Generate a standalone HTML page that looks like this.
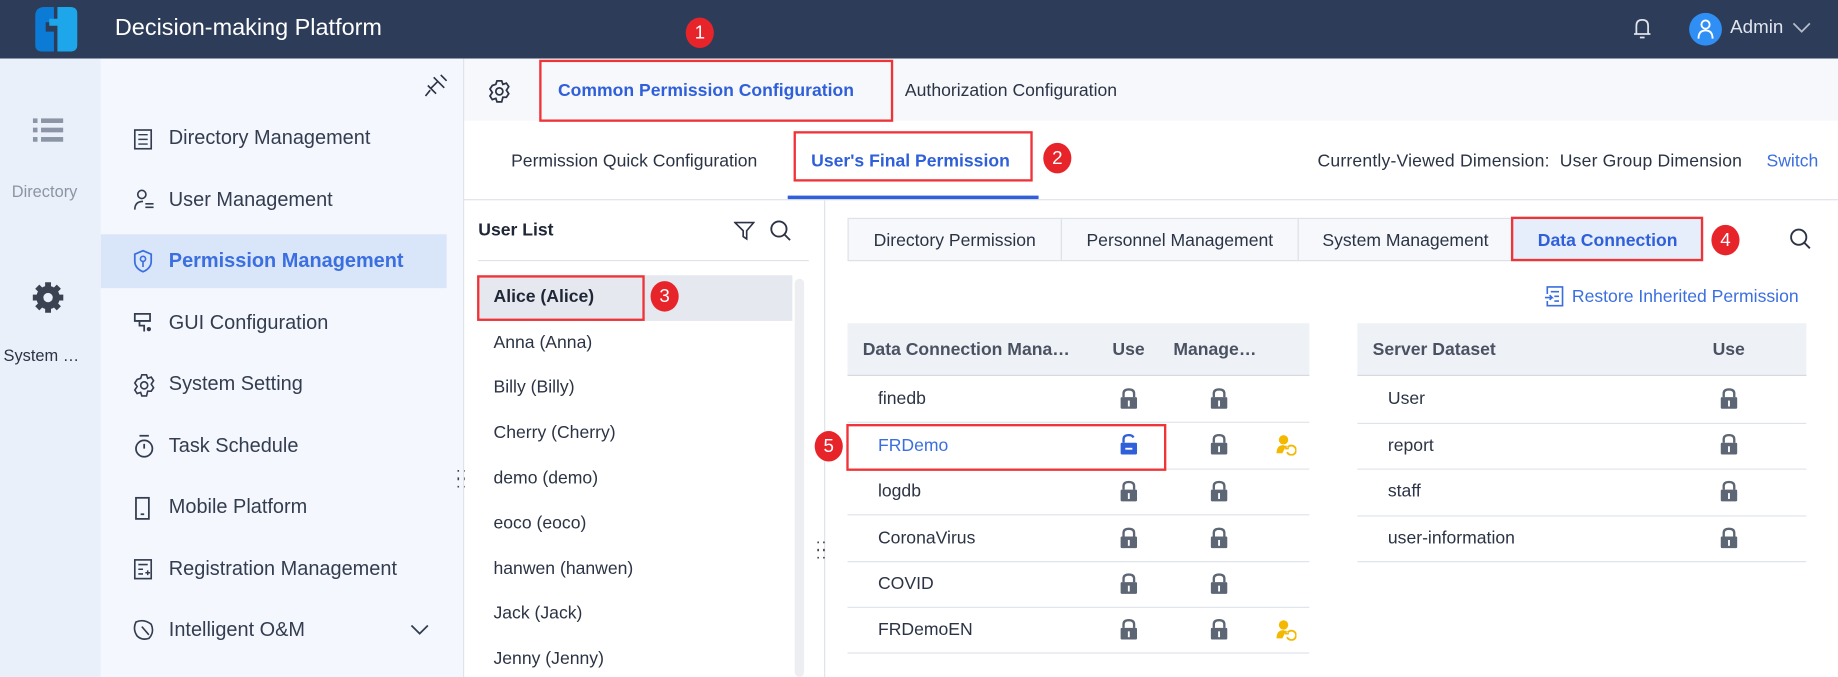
<!DOCTYPE html>
<html><head><meta charset="utf-8"><style>
*{margin:0;padding:0;box-sizing:border-box}
html,body{width:1838px;height:677px;overflow:hidden;background:#fff}
#w{position:absolute;left:0;top:0;width:1568px;height:578px;transform:scale(1.17219,1.1713);transform-origin:0 0;font-family:"Liberation Sans",sans-serif;color:#2b3344}
.a{position:absolute;white-space:nowrap}
.box{position:absolute;border:2.5px solid #ef3438}
.bd{position:absolute;width:24px;height:26px;border-radius:50%;background:#e8242b;color:#fff;font-size:16px;text-align:center;line-height:28px}
.mi{position:absolute;left:144px;font-size:17px;color:#333d4f}
.ic{position:absolute;left:113px}
.ul{position:absolute;left:421px;font-size:15px;color:#2b3344}
.row{position:absolute;height:1px;background:#dfe3ea}
.lk{position:absolute}
.tc{position:absolute;top:186px;height:37px;border:1px solid #dde1e8;background:#f6f8fb;font-size:15px;line-height:37px;text-align:center}
</style></head><body><div id="w">
<div class="a" style="left:0;top:0;width:1568px;height:50px;background:#2d3c58"></div>
<svg class="a" style="left:30px;top:6px" width="36" height="38" viewBox="0 0 36 38"><path d="M0 8 Q0 0 8 0 H16 V13 H9 V21 H16 V38 H6 Q0 38 0 32Z" fill="#0b7bd6"/><path d="M19 0 H30 Q36 0 36 6 V32 Q36 38 30 38 H19 V16 H12 V10 H19Z" fill="#1da6ea"/></svg>
<div class="a" style="left:98px;top:13px;font-size:20px;color:#fff">Decision-making Platform</div>
<svg class="a" style="left:1392px;top:14px" width="18" height="20" viewBox="0 0 18 20"><path d="M4 15 V8 Q4 3 9 3 Q14 3 14 8 V15 Z M2 15 H16 M7 18 H11" fill="none" stroke="#dfe3ea" stroke-width="1.5"/></svg>
<div class="a" style="left:1441px;top:11px;width:28px;height:28px;border-radius:50%;background:#2f8ff5"></div>
<svg class="a" style="left:1445px;top:15px" width="20" height="20"><circle cx="10" cy="6" r="3.5" fill="none" stroke="#fff" stroke-width="1.6"/><path d="M4 18 Q4 11 10 11 Q16 11 16 18" fill="none" stroke="#fff" stroke-width="1.6"/></svg>
<div class="a" style="left:1476px;top:15px;font-size:16px;color:#dfe4ee">Admin</div>
<svg class="a" style="left:1529px;top:19px" width="16" height="10"><path d="M1 1 L8 8 L15 1" fill="none" stroke="#b5bdcc" stroke-width="1.5"/></svg>
<div class="a" style="left:0;top:50px;width:86px;height:528px;background:#eaf0fa"></div>
<svg class="a" style="left:28px;top:101px" width="26" height="22"><g fill="#8b95a6"><rect x="0" y="0" width="4" height="4"/><rect x="7" y="0" width="19" height="4"/><rect x="0" y="8" width="4" height="4"/><rect x="7" y="8" width="19" height="4"/><rect x="0" y="16" width="4" height="4"/><rect x="7" y="16" width="19" height="4"/></g></svg>
<div class="a" style="left:10px;top:155px;font-size:14px;color:#8c95a5">Directory</div>
<svg class="a" style="left:27px;top:240px" width="28" height="28" viewBox="0 0 28 28"><g fill="#3b4252"><circle cx="14" cy="14" r="10"/><g stroke="#3b4252" stroke-width="5"><path d="M14 1V27M1 14H27M4.8 4.8L23.2 23.2M23.2 4.8L4.8 23.2"/></g></g><circle cx="14" cy="14" r="4" fill="#eaf0fa"/></svg>
<div class="a" style="left:3px;top:295px;font-size:14px;color:#2b3344">System …</div>
<div class="a" style="left:86px;top:50px;width:309px;height:528px;background:#f4f7fd"></div>
<svg class="a" style="left:362px;top:63px" width="20" height="20"><path d="M5 14 L1 19 M3 10 L10 17 M8 3 L17 12 M6 12 L12 6 M14 1 L19 6" fill="none" stroke="#2b3344" stroke-width="1.4"/></svg>
<div class="a" style="left:86px;top:200px;width:295px;height:46px;background:#d9e6fa"></div>
<svg class="ic" style="top:110px" width="18" height="18"><rect x="2" y="1" width="14" height="16" fill="none" stroke="#333d4f" stroke-width="1.4"/><path d="M5 5H13M5 9H13M5 13H13" stroke="#333d4f" stroke-width="1.2"/></svg>
<div class="mi" style="top:108px">Directory Management</div>
<svg class="ic" style="top:161px" width="20" height="20"><circle cx="8" cy="5" r="3.5" fill="none" stroke="#333d4f" stroke-width="1.4"/><path d="M2 18 Q2 11 9 11 M11 13H18M11 16H18" fill="none" stroke="#333d4f" stroke-width="1.4"/></svg>
<div class="mi" style="top:161px">User Management</div>
<svg class="ic" style="top:213px" width="18" height="20"><path d="M9 1 L16 4 V10 Q16 16 9 19 Q2 16 2 10 V4Z" fill="none" stroke="#3b6fe0" stroke-width="1.5"/><circle cx="9" cy="8" r="2.2" fill="none" stroke="#3b6fe0" stroke-width="1.4"/><path d="M9 10V15" stroke="#3b6fe0" stroke-width="1.4"/></svg>
<div class="mi" style="top:213px;color:#3b6fe0;font-weight:bold">Permission Management</div>
<svg class="ic" style="top:266px" width="18" height="20"><path d="M2 2H15V8H2Z M6 8V12H10V17" fill="none" stroke="#333d4f" stroke-width="1.5"/><circle cx="14" cy="15" r="1.8" fill="#333d4f"/></svg>
<div class="mi" style="top:266px">GUI Configuration</div>
<svg class="ic" style="top:319px" width="20" height="20" viewBox="0 0 20 20"><path d="M8 1H12L13 4 16 3 18 6 16 9 18 12 16 15 13 15 12 19H8L7 16 4 17 2 14 4 11 2 8 4 5 7 4Z" fill="none" stroke="#333d4f" stroke-width="1.4"/><circle cx="10" cy="10" r="3" fill="none" stroke="#333d4f" stroke-width="1.4"/></svg>
<div class="mi" style="top:318px">System Setting</div>
<svg class="ic" style="top:370px" width="20" height="22"><path d="M6 2H14" stroke="#333d4f" stroke-width="1.5"/><circle cx="10" cy="13" r="7" fill="none" stroke="#333d4f" stroke-width="1.5"/><path d="M10 9V13" stroke="#333d4f" stroke-width="1.5"/></svg>
<div class="mi" style="top:371px">Task Schedule</div>
<svg class="ic" style="top:424px" width="18" height="20"><rect x="3" y="1" width="11" height="18" fill="none" stroke="#333d4f" stroke-width="1.5"/><path d="M7 15H10" stroke="#333d4f" stroke-width="1.5"/></svg>
<div class="mi" style="top:423px">Mobile Platform</div>
<svg class="ic" style="top:476px" width="18" height="20"><rect x="2" y="2" width="14" height="16" fill="none" stroke="#333d4f" stroke-width="1.4"/><path d="M5 6H13M5 10H9M5 14H9M11 13H15M13 11V15" stroke="#333d4f" stroke-width="1.3"/></svg>
<div class="mi" style="top:476px">Registration Management</div>
<svg class="ic" style="top:528px" width="20" height="20"><path d="M3 3 Q10 0 16 5 Q19 12 14 17 Q8 19 4 15 Q0 9 3 3Z M8 7 L14 14" fill="none" stroke="#333d4f" stroke-width="1.4"/></svg>
<div class="mi" style="top:528px">Intelligent O&amp;M</div>
<svg class="a" style="left:350px;top:533px" width="16" height="10"><path d="M1 1 L8 8 L15 1" fill="none" stroke="#333d4f" stroke-width="1.5"/></svg>
<div class="a" style="left:389px;top:401px;font-size:14px;line-height:7px;color:#444;letter-spacing:1px">::<br>::</div>
<div class="a" style="left:395px;top:50px;width:1173px;height:53px;background:#f6f8fc;border-left:1px solid #dfe3ea"></div>
<svg class="a" style="left:416px;top:68px" width="20" height="20" viewBox="0 0 20 20"><path d="M8 1H12L13 4 16 3 18 6 16 9 18 12 16 15 13 15 12 19H8L7 16 4 17 2 14 4 11 2 8 4 5 7 4Z" fill="none" stroke="#2b3344" stroke-width="1.5"/><circle cx="10" cy="10" r="3" fill="none" stroke="#2b3344" stroke-width="1.5"/></svg>
<div class="box" style="left:460px;top:51px;width:302px;height:53px"></div>
<div class="a" style="left:476px;top:69px;font-size:15px;font-weight:bold;color:#2f5fd9">Common Permission Configuration</div>
<div class="a" style="left:772px;top:69px;font-size:15px;color:#2b3344">Authorization Configuration</div>
<div class="bd" style="left:585px;top:15px">1</div>
<div class="a" style="left:395px;top:103px;width:1173px;height:68px;border-left:1px solid #dfe3ea;border-bottom:1px solid #dfe3ea"></div>
<div class="a" style="left:436px;top:129px;font-size:15px">Permission Quick Configuration</div>
<div class="box" style="left:677px;top:112px;width:204px;height:43px"></div>
<div class="a" style="left:692px;top:129px;font-size:15px;font-weight:bold;color:#2f5fd9">User's Final Permission</div>
<div class="a" style="left:672px;top:167px;width:214px;height:3px;background:#2f5fd9"></div>
<div class="bd" style="left:890px;top:122px">2</div>
<div class="a" style="left:1124px;top:129px;font-size:15px;letter-spacing:0.15px">Currently-Viewed Dimension:&nbsp; User Group Dimension</div>
<div class="a" style="left:1507px;top:129px;font-size:15px;color:#3b6fe0">Switch</div>
<div class="a" style="left:395px;top:171px;width:1px;height:407px;background:#dfe3ea"></div>
<div class="a" style="left:408px;top:188px;font-size:15px;font-weight:bold;color:#1f2636">User List</div>
<svg class="a" style="left:626px;top:188px" width="18" height="18"><path d="M1 2H17L11 9V16L8 14V9Z" fill="none" stroke="#2b3344" stroke-width="1.4"/></svg>
<svg class="a" style="left:656px;top:187px" width="20" height="20"><circle cx="8.5" cy="8.5" r="6.5" fill="none" stroke="#2b3344" stroke-width="1.6"/><path d="M13 13L18 18" stroke="#2b3344" stroke-width="1.6"/></svg>
<div class="a" style="left:408px;top:222px;width:282px;height:1px;background:#dfe3ea"></div>
<div class="a" style="left:408px;top:235px;width:268px;height:39px;background:#e5e8ef"></div>
<div class="box" style="left:407px;top:235px;width:143px;height:39px"></div>
<div class="a" style="left:678px;top:238px;width:8px;height:340px;border-radius:4px;background:#eceef2"></div>
<div class="ul" style="top:245px;font-weight:bold;color:#1f2636">Alice (Alice)</div>
<div class="bd" style="left:555px;top:240px">3</div>
<div class="ul" style="top:284px">Anna (Anna)</div>
<div class="ul" style="top:322px">Billy (Billy)</div>
<div class="ul" style="top:361px">Cherry (Cherry)</div>
<div class="ul" style="top:400px">demo (demo)</div>
<div class="ul" style="top:438px">eoco (eoco)</div>
<div class="ul" style="top:477px">hanwen (hanwen)</div>
<div class="ul" style="top:515px">Jack (Jack)</div>
<div class="ul" style="top:554px">Jenny (Jenny)</div>
<div class="a" style="left:703px;top:171px;width:1px;height:407px;background:#dfe3ea"></div>
<div class="a" style="left:696px;top:462px;font-size:14px;line-height:7px;color:#444;letter-spacing:1px">::<br>::</div>
<div class="tc" style="left:723px;width:183px">Directory Permission</div>
<div class="tc" style="left:905px;width:203px">Personnel Management</div>
<div class="tc" style="left:1107px;width:184px">System Management</div>
<div class="tc" style="left:1290px;width:163px;background:#e6eefc;font-weight:bold;color:#2f5fd9">Data Connection</div>
<div class="box" style="left:1289px;top:185px;width:164px;height:38px"></div>
<div class="bd" style="left:1460px;top:192px">4</div>
<svg class="a" style="left:1526px;top:194px" width="20" height="20"><circle cx="8.5" cy="8.5" r="6.5" fill="none" stroke="#2b3344" stroke-width="1.6"/><path d="M13 13L18 18" stroke="#2b3344" stroke-width="1.6"/></svg>
<svg class="a" style="left:1317px;top:243px" width="18" height="20"><path d="M3 8V2H16V18H3V14 M6 6H13M9 10H13M9 14H13 M1 11H7L5 9M7 11L5 13" fill="none" stroke="#3b6fe0" stroke-width="1.4"/></svg>
<div class="a" style="left:1341px;top:245px;font-size:15px;color:#3b6fe0">Restore Inherited Permission</div>
<div class="a" style="left:723px;top:276px;width:394px;height:45px;background:#eef1f6;border-bottom:1px solid #d5d9e0"></div>
<div class="a" style="left:736px;top:290px;font-size:15px;font-weight:bold;color:#4a5262">Data Connection Mana…</div>
<div class="a" style="left:949px;top:290px;font-size:15px;font-weight:bold;color:#4a5262">Use</div>
<div class="a" style="left:1001px;top:290px;font-size:15px;font-weight:bold;color:#4a5262">Manage…</div>
<div class="row" style="left:723px;top:360px;width:394px"></div>
<div class="row" style="left:723px;top:400px;width:394px"></div>
<div class="row" style="left:723px;top:439px;width:394px"></div>
<div class="row" style="left:723px;top:479px;width:394px"></div>
<div class="row" style="left:723px;top:518px;width:394px"></div>
<div class="row" style="left:723px;top:557px;width:394px"></div>
<div class="a" style="left:749px;top:332px;font-size:15px">finedb</div>
<div class="a" style="left:749px;top:372px;font-size:15px;color:#3b6fe0">FRDemo</div>
<div class="a" style="left:749px;top:411px;font-size:15px">logdb</div>
<div class="a" style="left:749px;top:451px;font-size:15px">CoronaVirus</div>
<div class="a" style="left:749px;top:490px;font-size:15px">COVID</div>
<div class="a" style="left:749px;top:529px;font-size:15px">FRDemoEN</div>
<div class="box" style="left:722px;top:362px;width:273px;height:40px"></div>
<div class="bd" style="left:695px;top:368px">5</div>
<div class="a" style="left:1158px;top:276px;width:383px;height:45px;background:#eef1f6;border-bottom:1px solid #d5d9e0"></div>
<div class="a" style="left:1171px;top:290px;font-size:15px;font-weight:bold;color:#4a5262">Server Dataset</div>
<div class="a" style="left:1461px;top:290px;font-size:15px;font-weight:bold;color:#4a5262">Use</div>
<div class="row" style="left:1158px;top:361px;width:383px"></div>
<div class="row" style="left:1158px;top:400px;width:383px"></div>
<div class="row" style="left:1158px;top:440px;width:383px"></div>
<div class="row" style="left:1158px;top:479px;width:383px"></div>
<div class="a" style="left:1184px;top:332px;font-size:15px">User</div>
<div class="a" style="left:1184px;top:372px;font-size:15px">report</div>
<div class="a" style="left:1184px;top:411px;font-size:15px">staff</div>
<div class="a" style="left:1184px;top:451px;font-size:15px">user-information</div>
<svg width="0" height="0" style="position:absolute"><defs><g id="L"><path d="M3.5 8V5 Q3.5 1.5 8 1.5 Q12.5 1.5 12.5 5V8" fill="none" stroke="#5d6675" stroke-width="2"/><rect x="1" y="8" width="14" height="10" rx="1" fill="#5d6675"/><rect x="7.2" y="11" width="1.6" height="5" fill="#fff"/></g><g id="U"><path d="M3.5 8V5 Q3.5 1.5 8 1.5 Q11 1.5 12 3.5" fill="none" stroke="#2f5fd9" stroke-width="2"/><rect x="1" y="8" width="14" height="10" rx="1" fill="#2f5fd9"/><rect x="5" y="12.3" width="6" height="1.6" fill="#fff"/></g><g id="P"><circle cx="7" cy="4.5" r="4" fill="#f5b800"/><path d="M1 16 Q1 9 7 9 L9 10 L6 16Z" fill="#f5b800"/><path d="M10.5 11 A4 4 0 1 1 10 15" fill="none" stroke="#f5b800" stroke-width="1.6"/><path d="M9 9.5V12H11.5" fill="none" stroke="#f5b800" stroke-width="1.4"/></g></defs></svg>
<svg class="lk" style="left:955px;top:331px" width="16" height="19"><use href="#L"/></svg>
<svg class="lk" style="left:1032px;top:331px" width="16" height="19"><use href="#L"/></svg>
<svg class="lk" style="left:955px;top:370px" width="16" height="19"><use href="#U"/></svg>
<svg class="lk" style="left:1032px;top:370px" width="16" height="19"><use href="#L"/></svg>
<svg class="lk" style="left:1088px;top:371px" width="18" height="18"><use href="#P"/></svg>
<svg class="lk" style="left:955px;top:410px" width="16" height="19"><use href="#L"/></svg>
<svg class="lk" style="left:1032px;top:410px" width="16" height="19"><use href="#L"/></svg>
<svg class="lk" style="left:955px;top:450px" width="16" height="19"><use href="#L"/></svg>
<svg class="lk" style="left:1032px;top:450px" width="16" height="19"><use href="#L"/></svg>
<svg class="lk" style="left:955px;top:489px" width="16" height="19"><use href="#L"/></svg>
<svg class="lk" style="left:1032px;top:489px" width="16" height="19"><use href="#L"/></svg>
<svg class="lk" style="left:955px;top:528px" width="16" height="19"><use href="#L"/></svg>
<svg class="lk" style="left:1032px;top:528px" width="16" height="19"><use href="#L"/></svg>
<svg class="lk" style="left:1088px;top:529px" width="18" height="18"><use href="#P"/></svg>
<svg class="lk" style="left:1467px;top:331px" width="16" height="19"><use href="#L"/></svg>
<svg class="lk" style="left:1467px;top:370px" width="16" height="19"><use href="#L"/></svg>
<svg class="lk" style="left:1467px;top:410px" width="16" height="19"><use href="#L"/></svg>
<svg class="lk" style="left:1467px;top:450px" width="16" height="19"><use href="#L"/></svg>
</div></body></html>
